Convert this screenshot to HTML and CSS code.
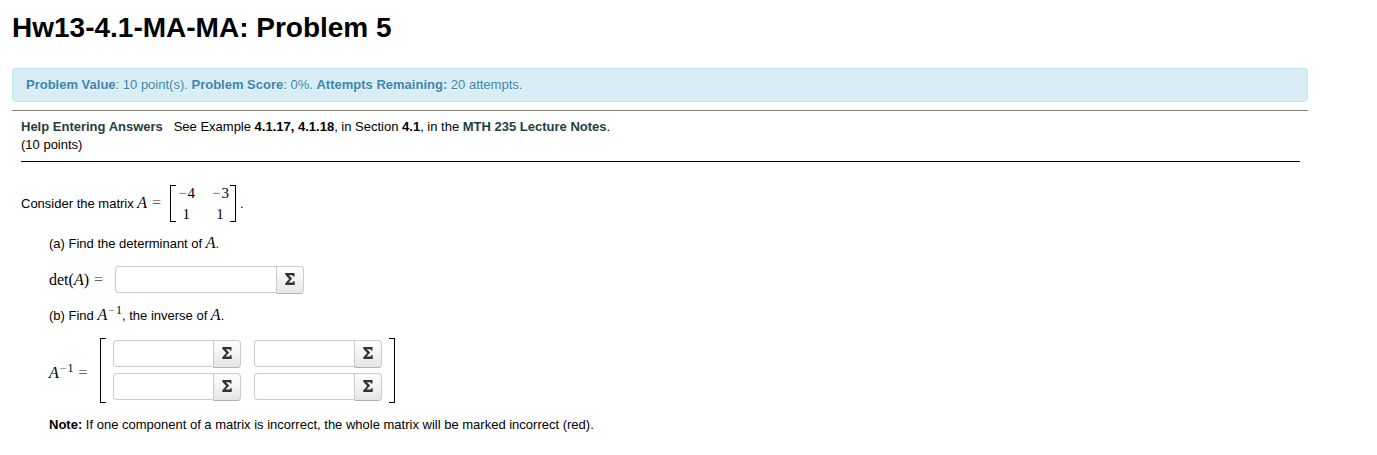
FILE: index.html
```html
<!DOCTYPE html>
<html lang="en">

<head>
    <meta charset="UTF-8">
    <meta name="viewport" content="width=device-width, initial-scale=1.0">
    <title>Hw13-4.1-MA-MA: Problem 5</title>
    <link rel="stylesheet" href="styles.css">
</head>

<body>
    <svg class="sprite" aria-hidden="true">
        <symbol id="sigma" viewBox="0 0 10 12">
            <path d="M0.3 0H9.5V3.5H8L7.6 2.2H3.8L7.2 5.6L3.6 9.6H7.8L8.3 8.3H9.7V12H0.3V10.3L4.2 6L0.3 1.8Z" />
        </symbol>
    </svg>
    <main class="page">
        <h1>Hw13-4.1-MA-MA: Problem 5</h1>
        <div class="alert">
            <b>Problem Value</b>: 10 point(s). <b>Problem Score</b>: 0%. <b>Attempts Remaining:</b> 20 attempts.
        </div>
        <form class="problem" onsubmit="return false">
            <div class="intro">
                <a href="#help">Help Entering Answers</a>&nbsp;&nbsp; See Example <b>4.1.17, 4.1.18</b>, in Section <b>4.1</b>, in the <a href="#notes">MTH 235 Lecture Notes</a>.
                <br>
                (10 points)
            </div>

            <div class="statement">
                <span>Consider the matrix <span class="math"><i>A</i> <span class="thin">=</span></span></span>
                <span class="matrix math">
                    <span><span class="thin">−</span>4</span>
                    <span><span class="thin">−</span>3</span>
                    <span>1</span>
                    <span>1</span>
                </span>
                <span>.</span>
            </div>

            <div class="parts">
                <p>(a) Find the determinant of <i class="math">A</i>.</p>
                <div class="row">
                    <label for="det" class="math">det(<i>A</i>) <span class="thin">=</span></label>
                    <div class="answer wide">
                        <input type="text" id="det">
                        <button type="button" aria-label="Equation editor"><svg><use href="#sigma" /></svg></button>
                    </div>
                </div>
                <p>(b) Find <span class="math"><i>A</i><sup><span class="thin">−</span>1</sup></span>, the inverse of <i class="math">A</i>.</p>
                <div class="row">
                    <span class="math"><i>A</i><sup><span class="thin">−</span>1</sup> <span class="thin">=</span></span>
                    <div class="matrix answers">
                        <div class="answer">
                            <input type="text" id="a11" aria-label="row 1 column 1">
                            <button type="button" aria-label="Equation editor"><svg><use href="#sigma" /></svg></button>
                        </div>
                        <div class="answer">
                            <input type="text" id="a12" aria-label="row 1 column 2">
                            <button type="button" aria-label="Equation editor"><svg><use href="#sigma" /></svg></button>
                        </div>
                        <div class="answer">
                            <input type="text" id="a21" aria-label="row 2 column 1">
                            <button type="button" aria-label="Equation editor"><svg><use href="#sigma" /></svg></button>
                        </div>
                        <div class="answer">
                            <input type="text" id="a22" aria-label="row 2 column 2">
                            <button type="button" aria-label="Equation editor"><svg><use href="#sigma" /></svg></button>
                        </div>
                    </div>
                </div>
                <p><b>Note:</b> If one component of a matrix is incorrect, the whole matrix will be marked incorrect (red).</p>
            </div>
        </form>
    </main>
</body>

</html>
```

FILE: styles.css
```css
* {
    box-sizing: border-box;
}

body {
    margin: 0;
    background-color: white;
    color: black;
    font-family: "Liberation Sans", Arial, Helvetica, sans-serif;
    font-size: 13px;
    line-height: 18px;
}

.sprite {
    display: none;
}

.page {
    padding: 8px 69px 8px 12px;
}

h1 {
    margin: 0 0 20px;
    font-size: 28px;
    line-height: 40px;
}

.alert {
    padding: 7px 13px;
    background-color: #d9edf7;
    border: 1px solid #bce8f1;
    border-radius: 4px;
    color: #3a87ad;
    text-shadow: 0 1px 0 rgba(255, 255, 255, 0.5);
}

.problem {
    margin-top: 8px;
    padding: 7px 8px 0 9px;
    border-top: 1px solid #808080;
}

.intro {
    padding-bottom: 7px;
    border-bottom: 1px solid black;
}

a {
    color: #1f4040;
    font-weight: bold;
    text-decoration: none;
}

.math {
    font-family: "Liberation Serif", "Times New Roman", serif;
    font-size: 16px;
    line-height: 0;
}

/* relation and minus signs are lighter than the digits */
.thin {
    padding: 0 1px;
    color: #666;
}

sup {
    font-size: 12px;
    line-height: 0;
}

.statement {
    display: flex;
    align-items: center;
    margin-top: 23px;
}

.matrix {
    display: grid;
    grid-template-columns: auto auto;
    position: relative;
    justify-items: center;
    padding: 0 7px;
    column-gap: 16px;
}

.statement .matrix {
    row-gap: 5px;
    margin: 0 4px 0 8px;
    font-size: 15px;
    line-height: 16px;
}

.matrix::before,
.matrix::after {
    content: "";
    position: absolute;
    top: 0;
    bottom: 0;
    width: 5px;
    border: 1px solid black;
}

.matrix::before {
    left: 0;
    border-right: none;
}

.matrix::after {
    right: 0;
    border-left: none;
}

.parts {
    padding: 8px 0 0 28px;
}

.parts p {
    margin: 0;
    padding: 5px 0 3px;
}

.row {
    display: flex;
    align-items: center;
    gap: 11px;
    padding: 10px 0 8px;
}

.answer {
    display: flex;
    height: 28px;
}

.answer input {
    width: 100px;
    height: 27px;
    padding: 4px 6px;
    border: 1px solid #ccc;
    border-right: none;
    border-radius: 4px 0 0 4px;
    font-size: 13px;
}

.answer.wide input {
    width: 161px;
}

.answer button {
    display: flex;
    align-items: center;
    justify-content: center;
    width: 28px;
    height: 28px;
    padding: 0 0 2px;
    border: 1px solid #ccc;
    border-bottom-color: #b3b3b3;
    border-radius: 0 4px 4px 0;
    background-image: linear-gradient(#fff, #e6e6e6);
    cursor: pointer;
}

.answer svg {
    width: 10px;
    height: 12px;
    fill: #333;
}

.answers {
    gap: 5px 13px;
    padding: 2px 13px;
}
```
